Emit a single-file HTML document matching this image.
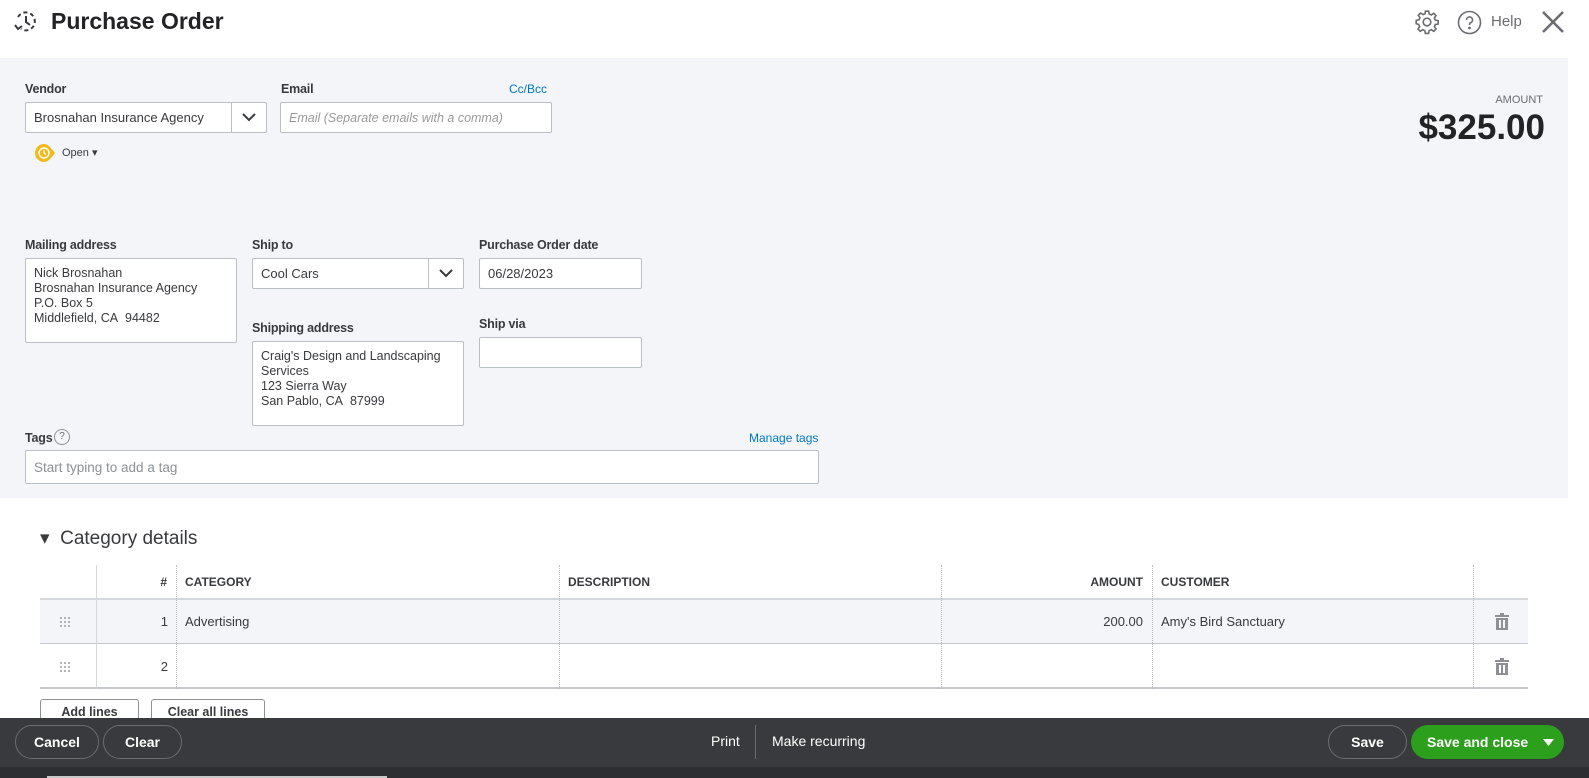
<!DOCTYPE html>
<html><head><meta charset="utf-8"><style>
*{box-sizing:border-box;margin:0;padding:0}
body{width:1589px;height:778px;overflow:hidden;font-family:"Liberation Sans",sans-serif;color:#393a3d;background:#fff;position:relative;font-size:13px}
.a{position:absolute}
.lbl{font-size:12.5px;font-weight:bold;color:#393a3d;letter-spacing:-0.2px}
.box{position:absolute;background:#fff;border:1px solid #babec5;border-radius:2px;font-size:13px;padding:0 8px;display:flex;align-items:center}
.dd{position:absolute;right:0;top:0;bottom:0;width:35px;border-left:1px solid #babec5;display:flex;align-items:center;justify-content:center}
.th{position:absolute;top:565px;height:34px;font-size:12px;font-weight:bold;display:flex;align-items:center;padding:0 9px;color:#393a3d}
.vl{position:absolute;width:0;border-left:1px dotted #bbb}
.pill{position:absolute;border:1px solid #6b6c72;border-radius:18px;color:#fff;font-weight:bold;font-size:14px;display:flex;align-items:center;justify-content:center;height:34px}
</style></head><body>
<svg class="a" style="left:12px;top:8px" width="28" height="28" viewBox="0 0 28 28" fill="none" stroke="#393a3d" stroke-width="2"><path d="M6 9 A9 9 0 1 1 9 21" stroke-dasharray="4 3"/><path d="M14 8v6l4 3"/><path d="M3 17l3 4 4-3"/></svg>
<div class="a" style="left:51px;top:8px;font-size:23px;font-weight:bold;color:#232326">Purchase Order</div>
<svg class="a" style="left:1414px;top:9px" width="26" height="26" viewBox="0 0 24 24" fill="none" stroke="#6b6c72" stroke-width="1.5"><circle cx="12" cy="12" r="3.5"/><path d="M10.5 2h3l.5 2.6 2 .9 2.2-1.5 2.1 2.1-1.5 2.2.9 2 2.6.5v3l-2.6.5-.9 2 1.5 2.2-2.1 2.1-2.2-1.5-2 .9-.5 2.6h-3l-.5-2.6-2-.9-2.2 1.5-2.1-2.1 1.5-2.2-.9-2L2 13.5v-3l2.6-.5.9-2L4 5.8 6.1 3.7l2.2 1.5 2-.9z"/></svg>
<svg class="a" style="left:1457px;top:10px" width="25" height="25" viewBox="0 0 25 25" fill="none" stroke="#6b6c72" stroke-width="1.6"><circle cx="12.5" cy="12.5" r="11"/><path d="M9.5 10a3 3 0 1 1 4 2.8c-1 .4-1 1-1 2.2"/><circle cx="12.5" cy="18" r=".6" fill="#6b6c72"/></svg>
<div class="a" style="left:1491px;top:13px;font-size:15px;color:#6b6c72">Help</div>
<svg class="a" style="left:1541px;top:10px" width="24" height="24" viewBox="0 0 24 24" stroke="#6b6c72" stroke-width="2.5"><path d="M2 2L22 22M22 2L2 22"/></svg>
<div class="a" style="left:0;top:58px;width:1568px;height:440px;background:#f4f5f8"></div>
<div class="a lbl" style="left:25px;top:82px">Vendor</div>
<div class="box" style="left:25px;top:102px;width:242px;height:31px">Brosnahan Insurance Agency<div class="dd"><svg width="14" height="9" viewBox="0 0 14 9" fill="none" stroke="#393a3d" stroke-width="2"><path d="M1 1l6 6 6-6"/></svg></div></div>
<div class="a lbl" style="left:281px;top:82px">Email</div>
<div class="a" style="left:509px;top:82px;font-size:12px;color:#0077c5">Cc/Bcc</div>
<div class="box" style="left:280px;top:102px;width:272px;height:31px;color:#999;font-style:italic;font-size:12.5px">Email (Separate emails with a comma)</div>
<svg class="a" style="left:34px;top:143px" width="22" height="20" viewBox="0 0 22 20"><path d="M10 1a9 9 0 1 0 0 18c4 0 6-3 11-9C16 4 14 1 10 1z" fill="#f2b91b"/><circle cx="10" cy="10" r="5" fill="none" stroke="#fff" stroke-width="1.4"/><path d="M10 7v3l2 1.5" fill="none" stroke="#fff" stroke-width="1.3"/></svg>
<div class="a" style="left:62px;top:146px;font-size:11px">Open ▾</div>
<div class="a" style="left:1450px;top:94px;width:93px;text-align:right;font-size:11px;color:#6b6c72">AMOUNT</div>
<div class="a" style="left:1340px;top:108px;width:205px;text-align:right;font-size:35px;font-weight:bold;color:#232326">$325.00</div>
<div class="a lbl" style="left:25px;top:238px">Mailing address</div>
<div class="box" style="left:25px;top:258px;width:212px;height:85px;align-items:flex-start;padding-top:7px;line-height:15px;font-size:12.5px">Nick Brosnahan<br>Brosnahan Insurance Agency<br>P.O. Box 5<br>Middlefield, CA&nbsp; 94482</div>
<div class="a lbl" style="left:252px;top:238px">Ship to</div>
<div class="box" style="left:252px;top:258px;width:212px;height:31px">Cool Cars<div class="dd"><svg width="14" height="9" viewBox="0 0 14 9" fill="none" stroke="#393a3d" stroke-width="2"><path d="M1 1l6 6 6-6"/></svg></div></div>
<div class="a lbl" style="left:479px;top:238px">Purchase Order date</div>
<div class="box" style="left:479px;top:258px;width:163px;height:31px">06/28/2023</div>
<div class="a lbl" style="left:252px;top:321px">Shipping address</div>
<div class="box" style="left:252px;top:341px;width:212px;height:85px;align-items:flex-start;padding-top:7px;line-height:15px;font-size:12.5px">Craig's Design and Landscaping Services<br>123 Sierra Way<br>San Pablo, CA&nbsp; 87999</div>
<div class="a lbl" style="left:479px;top:317px">Ship via</div>
<div class="box" style="left:479px;top:337px;width:163px;height:31px"></div>
<div class="a lbl" style="left:25px;top:431px">Tags</div>
<div class="a" style="left:54px;top:429px;width:16px;height:16px;border:1.3px solid #8d9096;border-radius:50%;font-size:10px;text-align:center;line-height:14px;color:#6b6c72">?</div>
<div class="a" style="left:749px;top:431px;font-size:12px;color:#0077c5">Manage tags</div>
<div class="box" style="left:25px;top:450px;width:794px;height:34px;color:#8d9096;font-size:13.5px">Start typing to add a tag</div>
<div class="a" style="left:40px;top:527px;font-size:19px;color:#393a3d">▾&nbsp;&nbsp;Category details</div>
<div class="a" style="left:40px;top:600px;width:1488px;height:44px;background:#f4f5f8"></div>
<div class="a" style="left:40px;top:598px;width:1488px;height:2px;background:#d4d7dc"></div>
<div class="a" style="left:40px;top:643px;width:1488px;height:1px;background:#c4c7cc"></div>
<div class="a" style="left:40px;top:687px;width:1488px;height:2px;background:#c4c7cc"></div>
<div class="vl" style="left:96px;top:565px;height:124px;border-left:1px solid #d4d7dc"></div>
<div class="vl" style="left:176px;top:565px;height:124px"></div>
<div class="vl" style="left:559px;top:565px;height:124px"></div>
<div class="vl" style="left:941px;top:565px;height:124px"></div>
<div class="vl" style="left:1152px;top:565px;height:124px"></div>
<div class="vl" style="left:1473px;top:565px;height:124px"></div>
<div class="th" style="left:96px;width:80px;justify-content:flex-end">#</div>
<div class="th" style="left:176px">CATEGORY</div>
<div class="th" style="left:559px">DESCRIPTION</div>
<div class="th" style="left:941px;width:211px;justify-content:flex-end">AMOUNT</div>
<div class="th" style="left:1152px">CUSTOMER</div>
<svg class="a" style="left:60px;top:617px" width="10" height="10" viewBox="0 0 10 10" fill="#9a9ca1"><circle cx="1" cy="1" r="1"/><circle cx="5" cy="1" r="1"/><circle cx="9" cy="1" r="1"/><circle cx="1" cy="5" r="1"/><circle cx="5" cy="5" r="1"/><circle cx="9" cy="5" r="1"/><circle cx="1" cy="9" r="1"/><circle cx="5" cy="9" r="1"/><circle cx="9" cy="9" r="1"/></svg>
<svg class="a" style="left:60px;top:662px" width="10" height="10" viewBox="0 0 10 10" fill="#9a9ca1"><circle cx="1" cy="1" r="1"/><circle cx="5" cy="1" r="1"/><circle cx="9" cy="1" r="1"/><circle cx="1" cy="5" r="1"/><circle cx="5" cy="5" r="1"/><circle cx="9" cy="5" r="1"/><circle cx="1" cy="9" r="1"/><circle cx="5" cy="9" r="1"/><circle cx="9" cy="9" r="1"/></svg>
<div class="a" style="left:96px;top:614px;width:72px;text-align:right">1</div>
<div class="a" style="left:96px;top:659px;width:72px;text-align:right">2</div>
<div class="a" style="left:185px;top:614px">Advertising</div>
<div class="a" style="left:941px;top:614px;width:202px;text-align:right">200.00</div>
<div class="a" style="left:1161px;top:614px">Amy's Bird Sanctuary</div>
<svg class="a" style="left:1495px;top:613px" width="14" height="17" viewBox="0 0 14 17" fill="#8d9096"><rect x="0" y="2" width="14" height="2"/><rect x="5" y="0" width="4" height="2"/><path d="M1 5h12v12H1z M4 7v8h2V7z M8 7v8h2V7z" fill-rule="evenodd"/></svg>
<svg class="a" style="left:1495px;top:658px" width="14" height="17" viewBox="0 0 14 17" fill="#8d9096"><rect x="0" y="2" width="14" height="2"/><rect x="5" y="0" width="4" height="2"/><path d="M1 5h12v12H1z M4 7v8h2V7z M8 7v8h2V7z" fill-rule="evenodd"/></svg>
<div class="a" style="left:40px;top:699px;width:99px;height:26px;border:1px solid #8d9096;border-radius:3px;text-align:center;padding-top:5px;font-size:12.5px;font-weight:bold">Add lines</div>
<div class="a" style="left:151px;top:699px;width:114px;height:26px;border:1px solid #8d9096;border-radius:3px;text-align:center;padding-top:5px;font-size:12.5px;font-weight:bold">Clear all lines</div>
<div class="a" style="left:0;top:718px;width:1589px;height:60px;background:#393a3d"></div>
<div class="a" style="left:0;top:767px;width:1589px;height:11px;background:#2d2e31"></div>
<div class="a" style="left:47px;top:776px;width:340px;height:2px;background:#c8c8c8"></div>
<div class="pill" style="left:15px;top:725px;width:84px">Cancel</div>
<div class="pill" style="left:103px;top:725px;width:79px">Clear</div>
<div class="a" style="left:711px;top:733px;color:#fff;font-size:14px">Print</div>
<div class="a" style="left:755px;top:725px;width:1px;height:34px;background:#6b6c72"></div>
<div class="a" style="left:772px;top:733px;color:#fff;font-size:14px">Make recurring</div>
<div class="pill" style="left:1328px;top:725px;width:79px">Save</div>
<div class="a" style="left:1411px;top:725px;width:153px;height:34px;border-radius:18px;background:#2ca01c;color:#fff;font-weight:bold;font-size:14px;padding:9px 0 0 16px">Save and close<svg style="position:absolute;right:10px;top:14px" width="11" height="7" viewBox="0 0 11 7"><path d="M0 0h11L5.5 7z" fill="#fff"/></svg></div>
</body></html>
